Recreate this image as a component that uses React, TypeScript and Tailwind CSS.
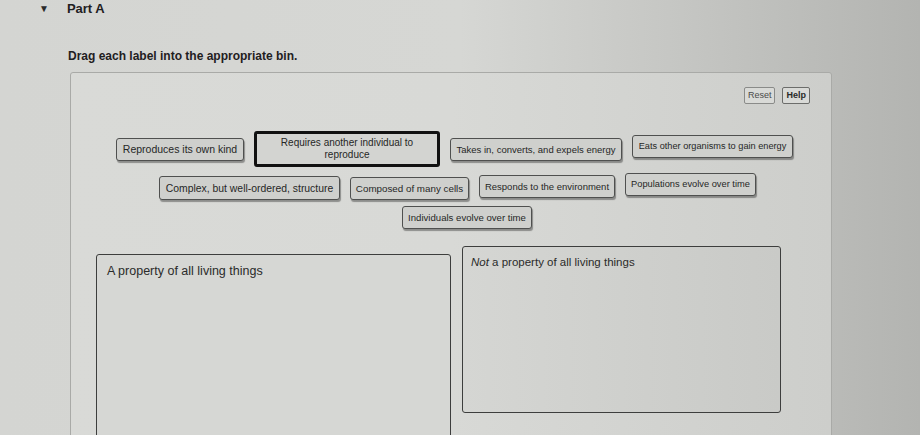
import React from "react";

const font = { fontFamily: '"Liberation Sans", Arial, sans-serif' };

function Label({ children, className = "" }: { children: React.ReactNode; className?: string }) {
  return (
    <div
      className={`flex items-center justify-center whitespace-nowrap rounded-[3px] border-[1.5px] border-[#4f504f] bg-[#cfd0cd] text-center leading-[11px] text-[#262726] shadow-[1px_2px_1px_rgba(0,0,0,0.35)] ${className}`}
    >
      {children}
    </div>
  );
}

export default function App() {
  return (
    <div
      style={font}
      className="h-[435px] w-[920px] overflow-hidden bg-linear-to-r from-[#d4d5d2] via-[#d6d7d4] to-[#b3b4b1] text-[#1f201f]"
    >
      {/* header */}
      <div className="flex items-center pt-[2px] pl-[39px]">
        <span className="text-[10px] leading-none text-[#2a2a2a]">▼</span>
        <span className="ml-[18px] text-[13px] font-bold leading-[14px]">Part A</span>
      </div>

      <div className="mt-[34px] pl-[68px] text-[12px] font-bold leading-[13px]">
        Drag each label into the appropriate bin.
      </div>

      {/* panel */}
      <div className="mt-[9px] ml-[70px] h-[400px] w-[762px] rounded-[3px] border border-[#a9aaa7] bg-linear-to-r from-[#d9dad7] via-[#d8d9d6] to-[#cdcecb] pt-[14px]">
        <div className="flex justify-end gap-[7px] pr-[21px]">
          <button className="h-[17px] rounded-[2px] border border-[#8a8b89] bg-[#d9dad7] px-[3px] text-[9px] text-[#4a4b4a]">
            Reset
          </button>
          <button className="h-[17px] rounded-[2px] border border-[#6c6d6b] bg-[#d9dad7] px-[3px] text-[9px] font-bold text-[#2a2b2a]">
            Help
          </button>
        </div>

        {/* labels */}
        <div className="mt-[27px] flex items-center pl-[45px] gap-[10px]">
          <Label className="h-[23px] w-[128px] text-[10.5px]">Reproduces its own kind</Label>
          <div className="flex h-[36px] w-[186px] flex-col items-center justify-center rounded-[3px] border-[3px] border-[#111] bg-[#d3d4d1] text-center text-[10px] leading-[12px] text-[#262726]">
            <span>Requires another individual to</span>
            <span>reproduce</span>
          </div>
          <Label className="h-[23px] w-[172px] text-[9.5px]">Takes in, converts, and expels energy</Label>
          <Label className="h-[23px] w-[161px] -translate-y-[3px] text-[9.2px]">Eats other organisms to gain energy</Label>
        </div>

        <div className="mt-[9px] flex items-center pl-[88px] gap-[10px]">
          <Label className="h-[24px] w-[181px] text-[10.4px]">Complex, but well-ordered, structure</Label>
          <Label className="h-[23px] w-[119px] text-[9.8px]">Composed of many cells</Label>
          <Label className="h-[23px] w-[136px] -translate-y-[2px] text-[9.5px]">Responds to the environment</Label>
          <Label className="h-[23px] w-[131px] -translate-y-[4px] text-[9.3px]">Populations evolve over time</Label>
        </div>

        <div className="mt-[6px] flex pl-[331px]">
          <Label className="h-[23px] w-[130px] text-[9.6px]">Individuals evolve over time</Label>
        </div>

        {/* bins */}
        <div className="mt-[17px] flex items-start gap-[11px] pl-[25px]">
          <div className="h-[185px] w-[355px] translate-y-[8px] rounded-[3px] border-[1.5px] border-[#3d3e3d] bg-[#d6d7d4] px-[10px] pt-[9px] text-[12.5px] leading-[14px] text-[#2a2b2a]">
            A property of all living things
          </div>
          <div className="h-[167px] w-[319px] rounded-[3px] border-[1.5px] border-[#3d3e3d] bg-linear-to-r from-[#d5d6d3] to-[#c9cac7] px-[8px] pt-[8px] text-[11.5px] leading-[14px] text-[#2a2b2a]">
            <i>Not</i> a property of all living things
          </div>
        </div>
      </div>
    </div>
  );
}
